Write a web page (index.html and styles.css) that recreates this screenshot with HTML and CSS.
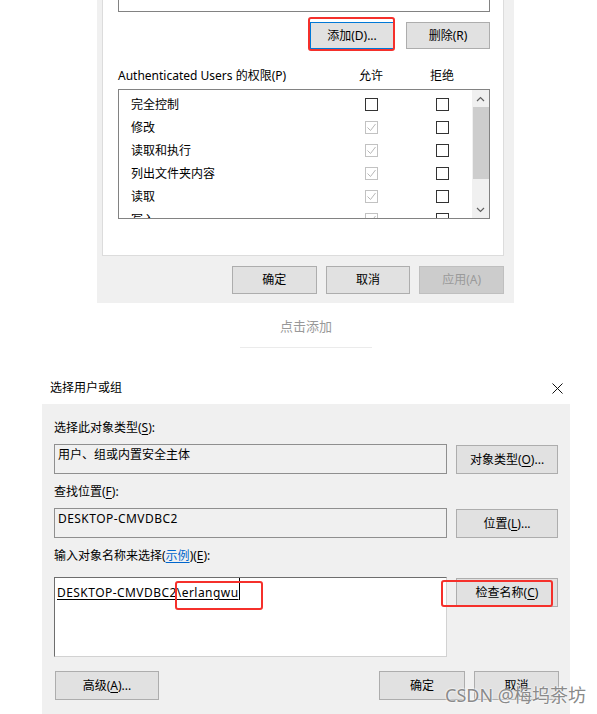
FILE: index.html
```html
<!DOCTYPE html>
<html lang="zh">
<head>
<meta charset="utf-8">
<title>选择用户或组</title>
<link rel="stylesheet" href="styles.css">
</head>
<body>
<div class="page">
  <section class="props">
    <div class="props-panel">
      <div class="prev-list"></div>
      <div class="top-btns">
        <div class="btn btn-focus">添加(D)...<span class="mark mark-add"></span></div>
        <div class="btn">删除(R)</div>
      </div>
      <div class="perm-head">
        <span class="perm-title">Authenticated Users 的权限(P)</span>
        <span class="col-head">允许</span>
        <span class="col-head">拒绝</span>
      </div>
      <div class="perm-list">
        <div class="perm-rows">
          <div class="perm-row"><span class="perm-name">完全控制</span><span class="cb"></span><span class="cb"></span></div>
          <div class="perm-row"><span class="perm-name">修改</span><span class="cb dis"><svg viewBox="0 0 11 11" class="tick"><polyline points="1.5,5.5 4.5,8.5 9.5,2"/></svg></span><span class="cb"></span></div>
          <div class="perm-row"><span class="perm-name">读取和执行</span><span class="cb dis"><svg viewBox="0 0 11 11" class="tick"><polyline points="1.5,5.5 4.5,8.5 9.5,2"/></svg></span><span class="cb"></span></div>
          <div class="perm-row"><span class="perm-name">列出文件夹内容</span><span class="cb dis"><svg viewBox="0 0 11 11" class="tick"><polyline points="1.5,5.5 4.5,8.5 9.5,2"/></svg></span><span class="cb"></span></div>
          <div class="perm-row"><span class="perm-name">读取</span><span class="cb dis"><svg viewBox="0 0 11 11" class="tick"><polyline points="1.5,5.5 4.5,8.5 9.5,2"/></svg></span><span class="cb"></span></div>
          <div class="perm-row"><span class="perm-name">写入</span><span class="cb dis"><svg viewBox="0 0 11 11" class="tick"><polyline points="1.5,5.5 4.5,8.5 9.5,2"/></svg></span><span class="cb"></span></div>
        </div>
        <div class="scrollbar">
          <div class="sb-btn"><svg viewBox="0 0 9 6" class="chev"><polyline points="1,5 4.5,1.5 8,5"/></svg></div>
          <div class="sb-thumb"></div>
          <div class="sb-track"></div>
          <div class="sb-btn"><svg viewBox="0 0 9 6" class="chev"><polyline points="1,1 4.5,4.5 8,1"/></svg></div>
        </div>
      </div>
    </div>
    <div class="dlg-btns">
      <div class="btn btn-wide">确定</div>
      <div class="btn btn-wide">取消</div>
      <div class="btn btn-wide btn-dis">应用(A)</div>
    </div>
  </section>

  <div class="caption">点击添加</div>

  <section class="dialog">
    <div class="dlg-title">
      <span>选择用户或组</span>
      <svg viewBox="0 0 11 11" class="close"><path d="M0.5 0.5 L10.5 10.5 M10.5 0.5 L0.5 10.5"/></svg>
    </div>
    <div class="dlg-body">
      <div class="label">选择此对象类型(<u>S</u>):</div>
      <div class="field-row">
        <div class="field">用户、组或内置安全主体</div>
        <div class="btn btn-side">对象类型(<u>O</u>)...</div>
      </div>
      <div class="label">查找位置(<u>F</u>):</div>
      <div class="field-row">
        <div class="field"><span class="lat">DESKTOP-CMVDBC2</span></div>
        <div class="btn btn-side">位置(<u>L</u>)...</div>
      </div>
      <div class="label">输入对象名称来选择(<span class="link">示例</span>)(<u>E</u>):</div>
      <div class="field-row field-row-big">
        <div class="textarea">
          <span class="entry lat">DESKTOP-CMVDBC2\erlangwu<span class="caret"></span></span>
          <span class="mark mark-name"></span>
        </div>
        <div class="btn btn-side">检查名称(<u>C</u>)<span class="mark mark-check"></span></div>
      </div>
      <div class="bottom-btns">
        <div class="btn btn-adv">高级(<u>A</u>)...</div>
        <div class="btn btn-ok">确定</div>
        <div class="btn btn-cancel">取消</div>
      </div>
    </div>
  </section>

  <div class="watermark">CSDN @梅坞茶坊</div>
</div>
</body>
</html>
```

FILE: styles.css
```css
* {
  box-sizing: border-box;
  margin: 0;
  padding: 0;
}

html, body {
  width: 597px;
  height: 714px;
  overflow: hidden;
  background: #fff;
}

body {
  font-family: "Noto Sans", "Noto Sans CJK SC", sans-serif;
  font-size: 12px;
  line-height: 16px;
  color: #000;
}

.page {
  position: relative;
  width: 597px;
  height: 714px;
}

u {
  text-decoration: underline;
  text-underline-offset: 2px;
}

.lat {
  letter-spacing: 0.45px;
}

/* ---------- top: permissions property page ---------- */
.props {
  margin-left: 97px;
  width: 417px;
  height: 303px;
  background: #f0f0f0;
  padding: 0 10px 0 5px;
}

.props-panel {
  height: 256px;
  background: #fff;
  border: 1px solid #dcdcdc;
  border-top: none;
  padding-left: 15px;
}

.prev-list {
  width: 372px;
  height: 12px;
  border: 1px solid #828282;
  border-top: none;
}

.top-btns {
  display: flex;
  justify-content: flex-end;
  gap: 12px;
  width: 372px;
  margin-top: 10px;
}

.btn {
  position: relative;
  height: 27px;
  width: 84px;
  background: #e1e1e1;
  border: 1px solid #adadad;
  display: flex;
  align-items: center;
  justify-content: center;
  white-space: nowrap;
}

.btn-focus {
  border-color: #0078d7;
}

.mark {
  position: absolute;
  border: 2px solid #f5302b;
  border-radius: 3px;
}

.mark-add {
  left: -3px;
  top: -6px;
  right: -2px;
  bottom: -3px;
}

.perm-head {
  display: grid;
  grid-template-columns: 207px 50px 50px;
  column-gap: 21px;
  margin-top: 19px;
  height: 16px;
}

.col-head {
  text-align: center;
}

.perm-list {
  display: flex;
  width: 372px;
  height: 130px;
  margin-top: 5px;
  border: 1px solid #828282;
}

.perm-rows {
  flex: 1;
  overflow: hidden;
  padding-top: 3px;
}

.perm-row {
  display: grid;
  grid-template-columns: 206px 50px 50px;
  column-gap: 21px;
  height: 23px;
  align-items: center;
}

.perm-name {
  padding-left: 12px;
}

.cb {
  justify-self: center;
  width: 13px;
  height: 13px;
  border: 1px solid #333;
  background: #fff;
  display: flex;
  align-items: center;
  justify-content: center;
}

.cb.dis {
  border-color: #c2c2c2;
}

.tick {
  width: 11px;
  height: 11px;
  fill: none;
  stroke: #b8b8b8;
  stroke-width: 1;
}

.scrollbar {
  width: 17px;
  background: #f0f0f0;
  display: flex;
  flex-direction: column;
}

.sb-btn {
  height: 17px;
  display: flex;
  align-items: center;
  justify-content: center;
}

.chev {
  width: 9px;
  height: 6px;
  fill: none;
  stroke: #606060;
  stroke-width: 1.2;
}

.sb-thumb {
  height: 72px;
  margin-left: 1px;
  background: #cdcdcd;
}

.sb-track {
  flex: 1;
}

.dlg-btns {
  display: flex;
  gap: 9px;
  margin-top: 10px;
  margin-left: 130px;
}

.btn-wide {
  width: 86px;
  height: 28px;
}

.btn-dis {
  background: #cccccc;
  border-color: #bfbfbf;
  color: #9a9a9a;
}

/* ---------- caption ---------- */
.caption {
  margin-left: 240px;
  width: 132px;
  padding: 14px 0 12px;
  line-height: 18px;
  font-size: 13px;
  color: #999;
  text-align: center;
  border-bottom: 1px solid #ebebeb;
}

/* ---------- dialog ---------- */
.dialog {
  margin-left: 42px;
  margin-top: 23px;
  width: 528px;
}

.dlg-title {
  height: 33px;
  display: flex;
  align-items: center;
  justify-content: space-between;
  padding: 1px 7px 0 8px;
}

.close {
  width: 11px;
  height: 11px;
  fill: none;
  stroke: #111;
  stroke-width: 1;
}

.dlg-body {
  background: #f0f0f0;
  height: 320px;
  padding: 16px 12px 0;
}

.label {
  line-height: 16px;
}

.link {
  color: #0066cc;
  text-decoration: underline;
  text-underline-offset: 2px;
}

.field-row {
  display: flex;
  gap: 9px;
  margin-top: 8px;
  margin-bottom: 10px;
}

.field {
  width: 393px;
  height: 30px;
  border: 1px solid #8f8f8f;
  padding: 2px 0 0 3px;
}

.btn-side {
  width: 102px;
  height: 29px;
  margin-top: 1px;
}

.field-row-big {
  margin-top: 13px;
  margin-bottom: 0;
}

.textarea {
  position: relative;
  width: 393px;
  height: 80px;
  background: #fff;
  border: 1px solid;
  border-color: #6d6d6d #d2d2d2 #d2d2d2 #6d6d6d;
  padding: 7px 0 0 2px;
}

.entry {
  position: relative;
  text-decoration: underline;
  text-underline-offset: 2px;
}

.caret {
  position: absolute;
  right: -1px;
  top: -6px;
  width: 1px;
  height: 22px;
  background: #000;
}

.mark-name {
  left: 120px;
  top: 3px;
  width: 88px;
  height: 29px;
}

.mark-check {
  left: -16px;
  top: 1px;
  width: 112px;
  height: 27px;
}

.bottom-btns {
  display: flex;
  gap: 9px;
  margin-top: 14px;
}

.btn-adv {
  width: 104px;
  height: 29px;
  margin-left: 1px;
}

.btn-ok {
  width: 86px;
  height: 29px;
  margin-left: auto;
}

.btn-cancel {
  width: 85px;
  height: 29px;
  margin-right: -1px;
}

/* ---------- watermark ---------- */
.watermark {
  position: absolute;
  left: 445px;
  top: 684px;
  font-size: 18px;
  line-height: 22px;
  color: #8a8a8a;
  text-shadow: 0 0 2px #fff, 0 0 2px #fff;
  white-space: nowrap;
}
```
